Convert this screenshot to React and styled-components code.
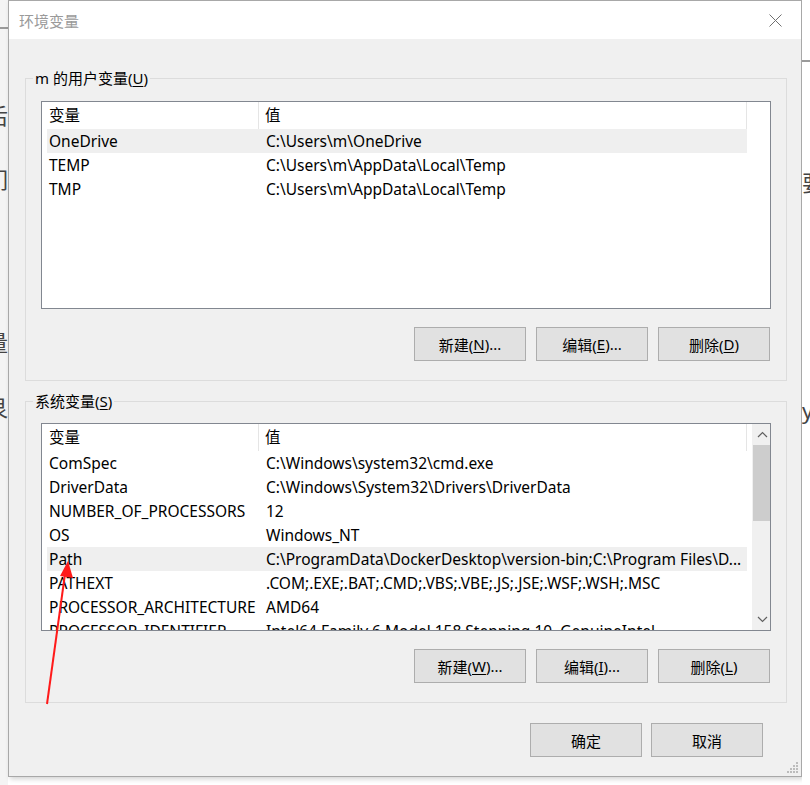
import React from "react";
import styled, { createGlobalStyle } from "styled-components";

const Global = createGlobalStyle`
  html, body { margin: 0; padding: 0; background: #ffffff; }
  body { font-family: "Noto Sans", "Noto Sans CJK SC", sans-serif; }
  * { box-sizing: border-box; }
`;

const FONT = `"Noto Sans", "Noto Sans CJK SC", sans-serif`;

const Page = styled.div`
  position: relative;
  width: 810px;
  height: 785px;
  display: flex;
  overflow: hidden;
  background: #ffffff;
`;

const Strip = styled.div`
  position: relative;
  width: ${(p) => p.$w}px;
  flex: none;
  background: ${(p) => p.$bg};
  overflow: hidden;
  display: flex;
  flex-direction: column;
`;

const StripLine = styled.div`
  height: 2px;
  background: #9a9a9a;
  margin-top: ${(p) => p.$top}px;
  flex: none;
`;

const StripChar = styled.div`
  font-family: ${FONT};
  font-size: 22px;
  line-height: 26px;
  color: #444;
  white-space: nowrap;
  margin-top: ${(p) => p.$top}px;
  margin-left: ${(p) => p.$left}px;
  flex: none;
`;

const Dialog = styled.div`
  position: relative;
  width: 794px;
  height: 777px;
  flex: none;
  border: 1px solid #a8a8a8;
  background: #f0f0f0;
  display: flex;
  flex-direction: column;
  box-shadow: 2px 2px 5px rgba(0, 0, 0, 0.18);
  font-family: ${FONT};
  color: #000;
`;

const TitleBar = styled.div`
  height: 38px;
  background: #ffffff;
  display: flex;
  align-items: center;
  justify-content: space-between;
  padding: 0 19px 0 10px;
  flex: none;
`;

const Title = styled.div`
  font-size: 15px;
  color: #9a9a9a;
`;

const CloseBtn = styled.div`
  width: 13px;
  height: 13px;
  display: flex;
`;

const Group = styled.fieldset`
  margin: ${(p) => p.$mt}px 14px 0 16px;
  padding: ${(p) => p.$pt}px 15px 19px 15px;
  border: 1px solid #dcdcdc;
  min-width: 0;
  display: flex;
  flex-direction: column;
`;

const Legend = styled.legend`
  font-size: 15px;
  line-height: 22px;
  padding: 0 2px;
  margin-left: -8px;
  color: #000;
`;

const List = styled.div`
  height: 208px;
  border: 1px solid #828790;
  background: #ffffff;
  display: flex;
  overflow: hidden;
`;

const ListBody = styled.div`
  width: 710px;
  flex: none;
  display: flex;
  flex-direction: column;
  overflow: hidden;
`;

const Header = styled.div`
  height: 27px;
  flex: none;
  display: flex;
  margin-left: 5px;
`;

const HeadCell = styled.div`
  width: ${(p) => p.$w}px;
  flex: none;
  font-size: 15.5px;
  line-height: 27px;
  padding-left: ${(p) => p.$pl}px;
  border-right: 1px solid #e5e5e5;
  height: 27px;
`;

const Row = styled.div`
  height: 24px;
  flex: none;
  display: flex;
  margin-left: 5px;
  width: 700px;
  background: ${(p) => (p.$sel ? "#efefef" : "transparent")};
`;

const Cell = styled.div`
  width: ${(p) => p.$w}px;
  flex: none;
  font-size: 15.5px;
  line-height: 24px;
  padding-left: ${(p) => p.$pl}px;
  white-space: nowrap;
  overflow: hidden;
`;

const Scrollbar = styled.div`
  width: 21px;
  flex: none;
  margin-left: auto;
  background: #f0f0f0;
  display: flex;
  flex-direction: column;
  align-items: center;
`;

const ArrowBox = styled.div`
  width: 21px;
  height: 21px;
  flex: none;
  display: flex;
  align-items: center;
  justify-content: center;
`;

const Thumb = styled.div`
  width: 19px;
  height: 76px;
  flex: none;
  background: #cdcdcd;
  margin-bottom: auto;
`;

const ButtonRow = styled.div`
  display: flex;
  justify-content: flex-end;
  gap: ${(p) => p.$gap}px;
  margin-top: ${(p) => p.$mt}px;
  padding-right: ${(p) => p.$pr}px;
`;

const Button = styled.div`
  width: 112px;
  height: 34px;
  background: #e1e1e1;
  border: 1px solid #adadad;
  display: flex;
  align-items: center;
  justify-content: center;
  font-size: 15px;
  color: #000;
`;

const Acc = styled.span`
  text-decoration: underline;
  text-underline-offset: 2px;
`;

const Grip = styled.svg`
  position: absolute;
  right: 2px;
  bottom: 2px;
`;

const Arrow = styled.svg`
  position: absolute;
  left: 0;
  top: 0;
  pointer-events: none;
`;

const userVars = [
  ["OneDrive", "C:\\Users\\m\\OneDrive", true],
  ["TEMP", "C:\\Users\\m\\AppData\\Local\\Temp"],
  ["TMP", "C:\\Users\\m\\AppData\\Local\\Temp"],
];

const sysVars = [
  ["ComSpec", "C:\\Windows\\system32\\cmd.exe"],
  ["DriverData", "C:\\Windows\\System32\\Drivers\\DriverData"],
  ["NUMBER_OF_PROCESSORS", "12"],
  ["OS", "Windows_NT"],
  ["Path", "C:\\ProgramData\\DockerDesktop\\version-bin;C:\\Program Files\\D...", true],
  ["PATHEXT", ".COM;.EXE;.BAT;.CMD;.VBS;.VBE;.JS;.JSE;.WSF;.WSH;.MSC"],
  ["PROCESSOR_ARCHITECTURE", "AMD64"],
  ["PROCESSOR_IDENTIFIER", "Intel64 Family 6 Model 158 Stepping 10, GenuineIntel"],
];

const Chevron = ({ up }) => (
  <svg width="11" height="7" viewBox="0 0 11 7">
    <path
      d={up ? "M1 6 L5.5 1.5 L10 6" : "M1 1 L5.5 5.5 L10 1"}
      fill="none"
      stroke="#606060"
      strokeWidth="1.2"
    />
  </svg>
);

function VarList({ rows, scroll }) {
  return (
    <List>
      <ListBody>
        <Header>
          <HeadCell $w={212} $pl={2}>变量</HeadCell>
          <HeadCell $w={488} $pl={6}>值</HeadCell>
        </Header>
        {rows.map(([k, v, sel]) => (
          <Row key={k} $sel={sel}>
            <Cell $w={212} $pl={2}>{k}</Cell>
            <Cell $w={488} $pl={7}>{v}</Cell>
          </Row>
        ))}
      </ListBody>
      {scroll && (
        <Scrollbar>
          <ArrowBox><Chevron up /></ArrowBox>
          <Thumb />
          <ArrowBox><Chevron /></ArrowBox>
        </Scrollbar>
      )}
    </List>
  );
}

export default function App() {
  return (
    <>
      <Global />
      <Page>
        <Strip $w={8} $bg="#f4f4f4">
          <StripLine $top={27} />
          <StripChar $top={73} $left={-14}>后</StripChar>
          <StripChar $top={38} $left={-14}>们</StripChar>
          <StripChar $top={137} $left={-14}>量</StripChar>
          <StripChar $top={39} $left={-14}>艮</StripChar>
        </Strip>
        <Dialog>
          <TitleBar>
            <Title>环境变量</Title>
            <CloseBtn>
              <svg width="13" height="13" viewBox="0 0 13 13">
                <path d="M0.5 0.5 L12.5 12.5 M12.5 0.5 L0.5 12.5" stroke="#707070" strokeWidth="1" />
              </svg>
            </CloseBtn>
          </TitleBar>
          <Group $mt={28} $pt={12}>
            <Legend>m 的用户变量(<Acc>U</Acc>)</Legend>
            <VarList rows={userVars} />
            <ButtonRow $gap={10} $mt={18} $pr={1}>
              <Button>新建(<Acc>N</Acc>)...</Button>
              <Button>编辑(<Acc>E</Acc>)...</Button>
              <Button>删除(<Acc>D</Acc>)</Button>
            </ButtonRow>
          </Group>
          <Group $mt={9} $pt={11}>
            <Legend>系统变量(<Acc>S</Acc>)</Legend>
            <VarList rows={sysVars} scroll />
            <ButtonRow $gap={10} $mt={18} $pr={1}>
              <Button>新建(<Acc>W</Acc>)...</Button>
              <Button>编辑(<Acc>I</Acc>)...</Button>
              <Button>删除(<Acc>L</Acc>)</Button>
            </ButtonRow>
          </Group>
          <ButtonRow $gap={9} $mt={20} $pr={38}>
            <Button>确定</Button>
            <Button>取消</Button>
          </ButtonRow>
          <Grip width="12" height="12" viewBox="0 0 12 12">
            {[[9, 1], [6, 4], [9, 4], [3, 7], [6, 7], [9, 7], [0, 10], [3, 10], [6, 10], [9, 10]].map(([x, y]) => (
              <rect key={`${x}-${y}`} x={x} y={y - 1} width="2" height="2" fill="#bcbcbc" />
            ))}
          </Grip>
        </Dialog>
        <Strip $w={8} $bg="#ffffff">
          <StripLine $top={60} />
          <StripChar $top={107} $left={0}>要</StripChar>
          <StripChar $top={202} $left={0}>y</StripChar>
        </Strip>
        <Arrow width="810" height="785" viewBox="0 0 810 785">
          <path d="M47 704 L65 574" stroke="#ff1a1a" strokeWidth="2" fill="none" />
          <path d="M68 561 L73 578 L60 576 Z" fill="#ff1a1a" />
        </Arrow>
      </Page>
    </>
  );
}
